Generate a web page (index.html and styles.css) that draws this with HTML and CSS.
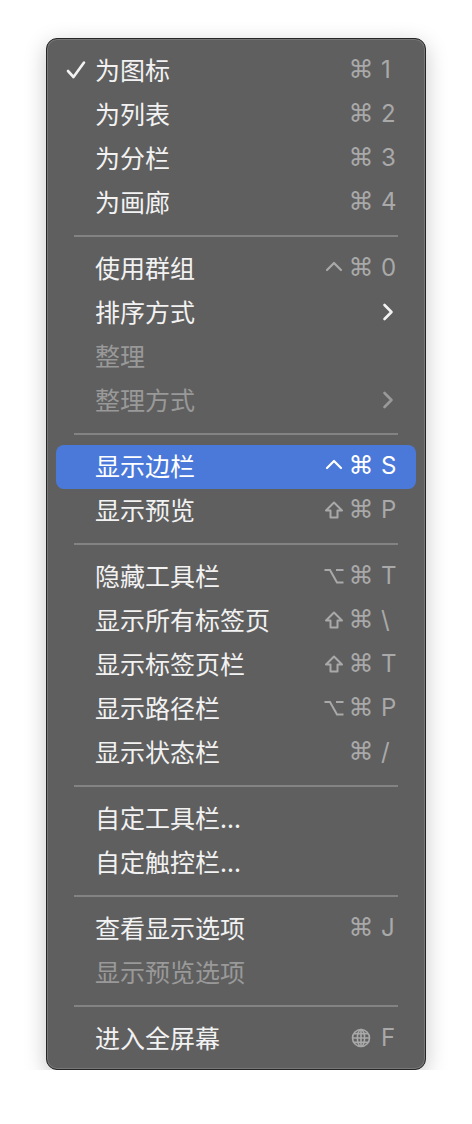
FILE: index.html
```html
<!DOCTYPE html>
<html lang="zh-CN">
<head>
  <meta charset="UTF-8" />
  <title>显示菜单</title>
  <link rel="stylesheet" href="styles.css">
</head>
<body>

  <!-- View menu -->
  <div class="menu">
    <div class="item">
      <span class="mark">
        <svg width="20" height="20" viewBox="0 0 20 20"><path d="M2 11 L7.5 17 L18 2.5" fill="none" stroke="#f2f2f2" stroke-width="2.6" stroke-linecap="round" stroke-linejoin="round"/></svg>
      </span>
      <span class="label">为图标</span>
      <span class="keys"><span class="mod"></span><span class="cmd">⌘</span><span class="key">1</span></span>
    </div>
    <div class="item">
      <span class="mark"></span><span class="label">为列表</span>
      <span class="keys"><span class="mod"></span><span class="cmd">⌘</span><span class="key">2</span></span>
    </div>
    <div class="item">
      <span class="mark"></span><span class="label">为分栏</span>
      <span class="keys"><span class="mod"></span><span class="cmd">⌘</span><span class="key">3</span></span>
    </div>
    <div class="item">
      <span class="mark"></span><span class="label">为画廊</span>
      <span class="keys"><span class="mod"></span><span class="cmd">⌘</span><span class="key">4</span></span>
    </div>

    <div class="sep"></div>

    <div class="item">
      <span class="mark"></span><span class="label">使用群组</span>
      <span class="keys"><span class="mod"><svg width="22" height="20" viewBox="0 0 22 20"><path d="M4 12 L11 5 L18 12" fill="none" stroke="currentColor" stroke-width="2.2" stroke-linecap="round" stroke-linejoin="round"/></svg></span><span class="cmd">⌘</span><span class="key">0</span></span>
    </div>
    <div class="item">
      <span class="mark"></span><span class="label">排序方式</span>
      <span class="arrow"><svg width="12" height="18" viewBox="0 0 12 18"><path d="M2.5 2 L9.5 9 L2.5 16" fill="none" stroke="currentColor" stroke-width="2.6" stroke-linecap="round" stroke-linejoin="round"/></svg></span>
    </div>
    <div class="item off">
      <span class="mark"></span><span class="label">整理</span>
    </div>
    <div class="item off">
      <span class="mark"></span><span class="label">整理方式</span>
      <span class="arrow"><svg width="12" height="18" viewBox="0 0 12 18"><path d="M2.5 2 L9.5 9 L2.5 16" fill="none" stroke="currentColor" stroke-width="2.6" stroke-linecap="round" stroke-linejoin="round"/></svg></span>
    </div>

    <div class="sep"></div>

    <div class="item active">
      <span class="mark"></span><span class="label">显示边栏</span>
      <span class="keys"><span class="mod"><svg width="22" height="20" viewBox="0 0 22 20"><path d="M4 12 L11 5 L18 12" fill="none" stroke="currentColor" stroke-width="2.2" stroke-linecap="round" stroke-linejoin="round"/></svg></span><span class="cmd">⌘</span><span class="key">S</span></span>
    </div>
    <div class="item">
      <span class="mark"></span><span class="label">显示预览</span>
      <span class="keys"><span class="mod"><svg width="22" height="20" viewBox="0 0 22 20"><path d="M11 2.5 L19 10.5 H14.5 V17.5 H7.5 V10.5 H3 Z" fill="none" stroke="currentColor" stroke-width="2" stroke-linejoin="round"/></svg></span><span class="cmd">⌘</span><span class="key">P</span></span>
    </div>

    <div class="sep"></div>

    <div class="item">
      <span class="mark"></span><span class="label">隐藏工具栏</span>
      <span class="keys"><span class="mod"><svg width="22" height="20" viewBox="0 0 22 20"><path d="M1.5 4 H7 L14 16.5 H20.5 M13 4 H20.5" fill="none" stroke="currentColor" stroke-width="2"/></svg></span><span class="cmd">⌘</span><span class="key">T</span></span>
    </div>
    <div class="item">
      <span class="mark"></span><span class="label">显示所有标签页</span>
      <span class="keys"><span class="mod"><svg width="22" height="20" viewBox="0 0 22 20"><path d="M11 2.5 L19 10.5 H14.5 V17.5 H7.5 V10.5 H3 Z" fill="none" stroke="currentColor" stroke-width="2" stroke-linejoin="round"/></svg></span><span class="cmd">⌘</span><span class="key">\</span></span>
    </div>
    <div class="item">
      <span class="mark"></span><span class="label">显示标签页栏</span>
      <span class="keys"><span class="mod"><svg width="22" height="20" viewBox="0 0 22 20"><path d="M11 2.5 L19 10.5 H14.5 V17.5 H7.5 V10.5 H3 Z" fill="none" stroke="currentColor" stroke-width="2" stroke-linejoin="round"/></svg></span><span class="cmd">⌘</span><span class="key">T</span></span>
    </div>
    <div class="item">
      <span class="mark"></span><span class="label">显示路径栏</span>
      <span class="keys"><span class="mod"><svg width="22" height="20" viewBox="0 0 22 20"><path d="M1.5 4 H7 L14 16.5 H20.5 M13 4 H20.5" fill="none" stroke="currentColor" stroke-width="2"/></svg></span><span class="cmd">⌘</span><span class="key">P</span></span>
    </div>
    <div class="item">
      <span class="mark"></span><span class="label">显示状态栏</span>
      <span class="keys"><span class="mod"></span><span class="cmd">⌘</span><span class="key">/</span></span>
    </div>

    <div class="sep"></div>

    <div class="item">
      <span class="mark"></span><span class="label">自定工具栏...</span>
    </div>
    <div class="item">
      <span class="mark"></span><span class="label">自定触控栏...</span>
    </div>

    <div class="sep"></div>

    <div class="item">
      <span class="mark"></span><span class="label">查看显示选项</span>
      <span class="keys"><span class="mod"></span><span class="cmd">⌘</span><span class="key">J</span></span>
    </div>
    <div class="item off">
      <span class="mark"></span><span class="label">显示预览选项</span>
    </div>

    <div class="sep"></div>

    <div class="item">
      <span class="mark"></span><span class="label">进入全屏幕</span>
      <span class="keys">
        <span class="mod"></span>
        <span class="cmd globe">
          <svg width="20" height="20" viewBox="0 0 20 20" fill="none" stroke="currentColor" stroke-width="1.6">
            <circle cx="10" cy="10" r="8.5"/>
            <ellipse cx="10" cy="10" rx="3.6" ry="8.5"/>
            <path d="M10 1.5 V18.5 M1.5 10 H18.5 M3 5.6 H17 M3 14.4 H17"/>
          </svg>
        </span>
        <span class="key">F</span>
      </span>
    </div>
  </div>

</body>
</html>
```

FILE: styles.css
```css
* { box-sizing: border-box; }
body {
  margin: 0;
  background: #ffffff;
  font-family: "Noto Sans CJK SC", "Noto Sans", sans-serif;
}
.menu {
  margin: 38px 0 0 46px;
  width: 380px;
  padding: 10px 0 8px;
  background: #5f5f5f;
  border: 1px solid #262626;
  border-radius: 11px;
  box-shadow: inset 0 0 0 1px rgba(255, 255, 255, 0.16), 0 6px 22px rgba(0, 0, 0, 0.22);
}
.item {
  display: grid;
  grid-template-columns: 39px 1fr auto;
  align-items: center;
  height: 44px;
  margin: 0 9px;
  padding: 0 20px 3px 0;
  border-radius: 8px;
  color: #f2f2f2;
  font-size: 25px;
}
.item.off { color: #999999; }
.item.active {
  background: #4b79d9;
  color: #ffffff;
}
.mark {
  display: flex;
  align-items: center;
  padding-left: 10px;
}
.label {
  line-height: 1;
  white-space: nowrap;
}
.keys {
  display: flex;
  align-items: center;
  color: #a9a9a9;
  font-family: "Inter", "DejaVu Sans", sans-serif;
  font-size: 24px;
}
.active .keys { color: #ffffff; }
.mod {
  display: flex;
  justify-content: center;
  width: 26px;
}
.cmd {
  width: 28px;
  line-height: 1;
  text-align: center;
  font-family: "DejaVu Sans", sans-serif;
  font-size: 25px;
}
.globe {
  display: flex;
  justify-content: center;
}
.key {
  width: 15px;
  margin-left: 6px;
  text-align: left;
}
.arrow {
  display: flex;
  align-items: center;
  padding-right: 2px;
}
.off .arrow { color: #999999; }
.sep {
  height: 2px;
  margin: 10px 27px;
  background: #838383;
}
```
